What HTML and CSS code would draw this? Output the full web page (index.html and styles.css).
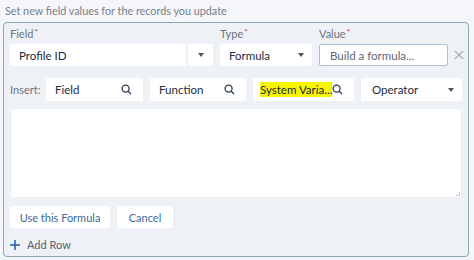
FILE: index.html
```html
<!DOCTYPE html>
<html lang="en">
<head>
    <meta charset="UTF-8">
    <title>Update Records</title>
    <link rel="stylesheet" href="styles.css">
</head>
<body>
    <p class="intro">Set new field values for the records you update</p>

    <div class="panel">
        <div class="field-row">
            <div class="col col-field">
                <span class="label">Field<span class="req">*</span></span>
                <div class="split">
                    <div class="box grow">Profile ID</div>
                    <div class="box arrow-box"><span class="caret"></span></div>
                </div>
            </div>
            <div class="col col-type">
                <span class="label">Type<span class="req">*</span></span>
                <div class="box">Formula<span class="caret"></span></div>
            </div>
            <div class="col col-value">
                <span class="label">Value<span class="req">*</span></span>
                <div class="box input">Build a formula...</div>
            </div>
            <div class="remove">
                <svg width="10" height="10" viewBox="0 0 10 10"><path d="M1 1 L9 9 M9 1 L1 9" stroke="#a4acb5" stroke-width="1.1" fill="none"/></svg>
            </div>
        </div>

        <div class="insert-row">
            <span class="insert-label">Insert:</span>
            <div class="box search">Field<svg class="lens" width="11" height="11" viewBox="0 0 11 11"><circle cx="4.6" cy="4.6" r="3.5" stroke="#2b3c55" stroke-width="1.3" fill="none"/><path d="M7.2 7.2 L10 10" stroke="#2b3c55" stroke-width="1.4"/></svg></div>
            <div class="box search narrow">Function<svg class="lens" width="11" height="11" viewBox="0 0 11 11"><circle cx="4.6" cy="4.6" r="3.5" stroke="#2b3c55" stroke-width="1.3" fill="none"/><path d="M7.2 7.2 L10 10" stroke="#2b3c55" stroke-width="1.4"/></svg></div>
            <div class="box search sysvar"><span class="mark">System Varia...</span><svg class="lens" width="11" height="11" viewBox="0 0 11 11"><circle cx="4.6" cy="4.6" r="3.5" stroke="#2b3c55" stroke-width="1.3" fill="none"/><path d="M7.2 7.2 L10 10" stroke="#2b3c55" stroke-width="1.4"/></svg></div>
            <div class="box operator">Operator<span class="caret"></span></div>
        </div>

        <div class="formula-area"><span class="grip"></span></div>

        <div class="actions">
            <button class="btn">Use this Formula</button>
            <button class="btn">Cancel</button>
        </div>

        <div class="add-row">
            <svg width="10" height="10" viewBox="0 0 10 10"><path d="M5 0 V10 M0 5 H10" stroke="#1f5fa8" stroke-width="1.5"/></svg>
            <span>Add Row</span>
        </div>
    </div>
</body>
</html>
```

FILE: styles.css
```css
* {
    margin: 0;
    padding: 0;
    box-sizing: border-box;
}

body {
    font-family: 'Lato', 'Noto Sans', sans-serif;
    font-size: 11px;
    background: #f4f6f9;
    color: #16325c;
    width: 474px;
    height: 260px;
    padding: 1px 5px 0 3px;
    white-space: nowrap;
}

.intro {
    color: #76808c;
    font-size: 10.8px;
    padding-left: 2px;
    height: 21px;
    line-height: 19px;
}

.panel {
    background: #eef1f5;
    border: 1px solid #87a7b3;
    border-radius: 4px;
    padding: 3px 6px 0 6px;
    height: 235px;
}

.field-row {
    display: flex;
    align-items: flex-end;
}

.col {
    display: flex;
    flex-direction: column;
    margin-right: 7px;
    flex: none;
}

.col-field { width: 203px; }
.col-type { width: 92px; }
.col-value { width: 129px; margin-right: 0; }

.label {
    color: #6b7480;
    font-size: 11px;
    height: 18px;
    line-height: 15px;
}

.req {
    color: #c23934;
    font-size: 8px;
    vertical-align: top;
    margin-left: 1px;
    line-height: 12px;
}

.split {
    display: flex;
    gap: 2px;
}

.box {
    background: #fff;
    height: 22px;
    border-radius: 2px;
    display: flex;
    align-items: center;
    justify-content: space-between;
    padding: 0 8px 0 9px;
    font-size: 11.5px;
    color: #1d2b3e;
    flex: none;
}

.split .grow { flex: 1; }

.arrow-box {
    width: 25px;
    justify-content: center;
    padding: 0;
}

.caret {
    width: 0;
    height: 0;
    border-left: 3.5px solid transparent;
    border-right: 3.5px solid transparent;
    border-top: 4px solid #4a5565;
}

.input {
    border: 1px solid #a9bfcf;
    color: #5d6875;
    padding-left: 10px;
}

.remove {
    width: 16px;
    height: 22px;
    margin-right: -2px;
    display: flex;
    align-items: center;
    justify-content: flex-end;
    flex: none;
}

.insert-row {
    display: flex;
    align-items: center;
    gap: 7px;
    margin-top: 12px;
}

.insert-label {
    color: #6b7480;
    width: 29px;
    flex: none;
}

.insert-row .box {
    height: 23px;
    width: 97px;
    padding-right: 11px;
}

.insert-row .narrow {
    width: 96px;
}

.insert-row .sysvar,
.insert-row .operator {
    width: 101px;
}

.sysvar {
    padding-left: 7px;
}

.insert-row .operator {
    padding-right: 8px;
    padding-left: 11px;
}

.mark {
    background: #f6f500;
    padding: 1px 0;
}

.lens { flex: none; }

.formula-area {
    background: #fff;
    height: 90px;
    margin-top: 7px;
    border: 1px solid #eceff3;
    border-radius: 2px;
    position: relative;
}

.grip {
    position: absolute;
    right: 1px;
    bottom: 1px;
    width: 4px;
    height: 4px;
    border-right: 1px solid #c9ced4;
    border-bottom: 1px solid #c9ced4;
}

.actions {
    display: flex;
    gap: 7px;
    margin-top: 8px;
}

.btn {
    background: #fff;
    border: none;
    border-radius: 3px;
    height: 22px;
    font-family: inherit;
    font-size: 11px;
    color: #3b6aa0;
    padding: 0;
}

.btn:first-child { width: 100px; }
.btn:last-child { width: 56px; }

.add-row {
    display: flex;
    align-items: center;
    gap: 7px;
    margin-top: 10px;
    color: #53606e;
    font-size: 11px;
}
```
